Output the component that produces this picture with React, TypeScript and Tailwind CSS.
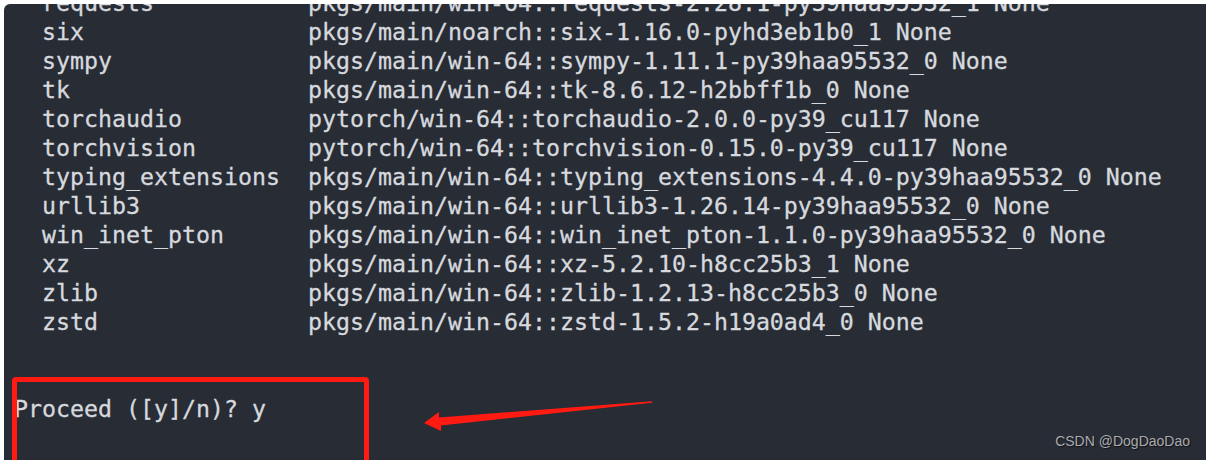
import React from "react";

const rows: [string, string][] = [
  ["requests", "pkgs/main/win-64::requests-2.28.1-py39haa95532_1 None"],
  ["six", "pkgs/main/noarch::six-1.16.0-pyhd3eb1b0_1 None"],
  ["sympy", "pkgs/main/win-64::sympy-1.11.1-py39haa95532_0 None"],
  ["tk", "pkgs/main/win-64::tk-8.6.12-h2bbff1b_0 None"],
  ["torchaudio", "pytorch/win-64::torchaudio-2.0.0-py39_cu117 None"],
  ["torchvision", "pytorch/win-64::torchvision-0.15.0-py39_cu117 None"],
  ["typing_extensions", "pkgs/main/win-64::typing_extensions-4.4.0-py39haa95532_0 None"],
  ["urllib3", "pkgs/main/win-64::urllib3-1.26.14-py39haa95532_0 None"],
  ["win_inet_pton", "pkgs/main/win-64::win_inet_pton-1.1.0-py39haa95532_0 None"],
  ["xz", "pkgs/main/win-64::xz-5.2.10-h8cc25b3_1 None"],
  ["zlib", "pkgs/main/win-64::zlib-1.2.13-h8cc25b3_0 None"],
  ["zstd", "pkgs/main/win-64::zstd-1.5.2-h19a0ad4_0 None"],
];

export default function App() {
  return (
    <div className="w-[1206px] h-[460px] bg-white pl-[4px] pt-[4px] overflow-hidden">
      <div className="relative h-[456px] bg-[#282c35] rounded-tl-[6px] overflow-hidden">
        <div
          className="mt-[-16px] pl-[10px] text-[23.25px] leading-[29px] text-[#d6d9de] whitespace-pre [-webkit-text-stroke:0.3px_#d6d9de]"
          style={{ fontFamily: '"DejaVu Sans Mono", "Liberation Mono", monospace' }}
        >
          {rows.map(([name, spec]) => (
            <div key={name}>{"  " + name.padEnd(19, " ") + spec}</div>
          ))}
          <div>{" "}</div>
          <div>{" "}</div>
          <div>Proceed ([y]/n)? y</div>
        </div>

        <div className="absolute left-[8px] top-[373px] w-[357px] h-[120px] border-[5px] border-[#ff1b12] rounded-[4px]" />

        <svg className="absolute left-0 top-0" width="1202" height="456" viewBox="0 0 1202 456">
          <polygon
            points="648,397.2 648,398.8 437,421.5 437,427 420,419 435,408 435,413.5"
            fill="#ff1b12"
          />
        </svg>

        <div
          className="absolute right-[16px] bottom-[8px] text-[14px] text-[#a9abae] [text-shadow:1px_1px_1px_rgba(0,0,0,0.6)]"
          style={{ fontFamily: '"Liberation Sans", Arial, sans-serif' }}
        >
          CSDN @DogDaoDao
        </div>
      </div>
    </div>
  );
}
